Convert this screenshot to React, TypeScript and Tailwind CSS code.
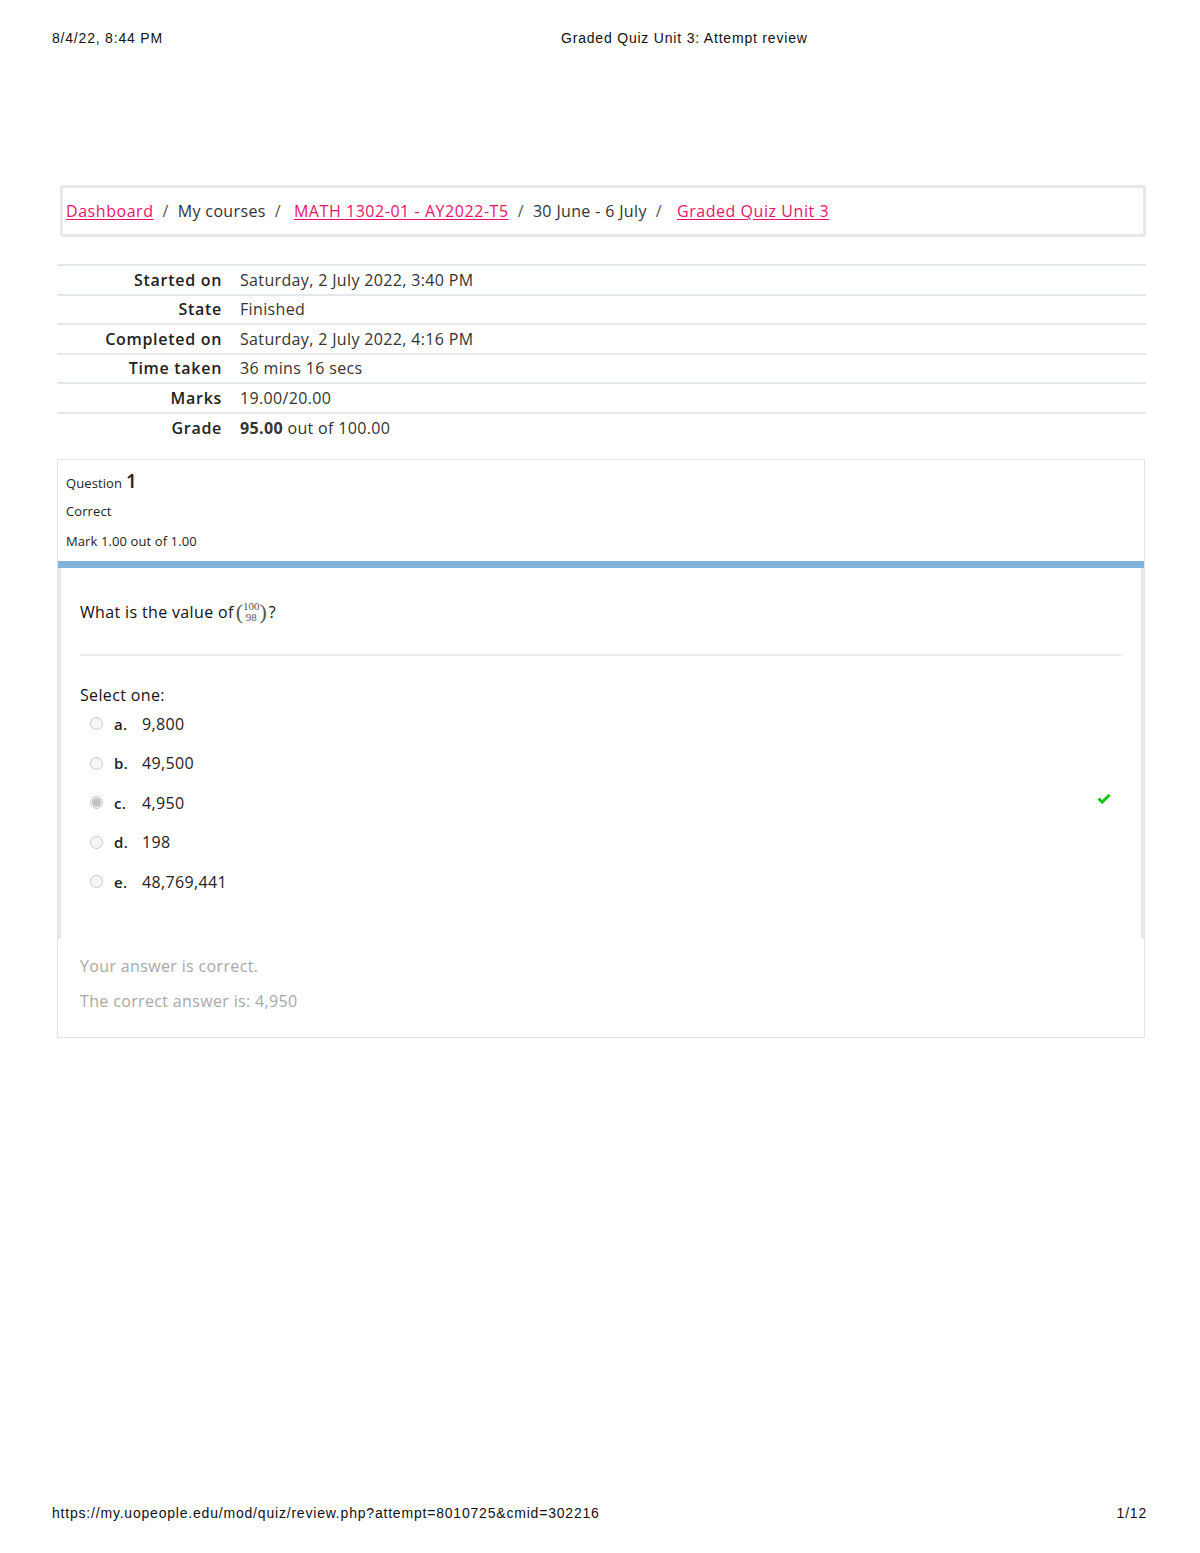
import React from 'react'

const sans = "font-['Open_Sans','Liberation_Sans',sans-serif]"

const rows: { label: string; value: React.ReactNode }[] = [
  { label: 'Started on', value: 'Saturday, 2 July 2022, 3:40 PM' },
  { label: 'State', value: 'Finished' },
  { label: 'Completed on', value: 'Saturday, 2 July 2022, 4:16 PM' },
  { label: 'Time taken', value: '36 mins 16 secs' },
  { label: 'Marks', value: '19.00/20.00' },
  {
    label: 'Grade',
    value: (
      <>
        <b className="font-bold">95.00</b> out of 100.00
      </>
    ),
  },
]

const options = [
  { key: 'a.', value: '9,800' },
  { key: 'b.', value: '49,500' },
  { key: 'c.', value: '4,950', checked: true },
  { key: 'd.', value: '198' },
  { key: 'e.', value: '48,769,441' },
]

function Crumb({ children }: { children: React.ReactNode }) {
  return <a className="tracking-[0.55px] text-[#e8136b] underline underline-offset-2">{children}</a>
}

function Sep() {
  return <span className="px-[9px] text-[#555]">/</span>
}

function Radio({ checked }: { checked?: boolean }) {
  return (
    <span className="flex h-[13px] w-[13px] items-center justify-center rounded-full border border-[#c8c8c8] bg-[#f6f6f6]">
      {checked && <span className="h-[9px] w-[9px] rounded-full bg-[#c4c4c4]" />}
    </span>
  )
}

function Binom() {
  return (
    <span className="mx-[2px] inline-flex items-center align-middle font-['Liberation_Serif',serif] tracking-normal text-[#555]">
      <span className="text-[22px] font-light leading-none">(</span>
      <span className="flex flex-col items-center text-[11px] leading-[11px]">
        <span>100</span>
        <span>98</span>
      </span>
      <span className="text-[22px] font-light leading-none">)</span>
    </span>
  )
}

export default function App() {
  return (
    <div className="flex min-h-[1553px] w-[1200px] flex-col bg-white text-[#1d2125]">
      <div className="flex pt-[30px] pl-[52px] font-['Liberation_Sans',Arial,sans-serif] text-[14px] leading-[16px] tracking-[0.8px] text-[#111]">
        <span className="w-[509px]">8/4/22, 8:44 PM</span>
        <span>Graded Quiz Unit 3: Attempt review</span>
      </div>

      <main className={`${sans} mt-[139px] pl-[57px] pr-[54px] tracking-[0.35px]`}>
        <div className="ml-[3px] flex h-[52px] items-center rounded-[3px] border-[3px] border-[#e6e8ec] pl-[3px] text-[16px] text-[#333]">
          <Crumb>Dashboard</Crumb>
          <Sep />
          <span>My courses</span>
          <Sep />
          <span className="pl-[4px]" />
          <Crumb>MATH 1302-01 - AY2022-T5</Crumb>
          <Sep />
          <span>30 June - 6 July</span>
          <Sep />
          <span className="pl-[6px]" />
          <Crumb>Graded Quiz Unit 3</Crumb>
        </div>

        <div className="mt-[27px] border-t-2 border-[#e3e6ea] text-[16px]">
          {rows.map((r, i) => (
            <div
              key={r.label}
              className={`flex h-[29.5px] items-center ${i < rows.length - 1 ? 'border-b-2 border-[#e3e6ea]' : ''}`}
            >
              <span className="w-[165px] text-right font-semibold tracking-[0.7px] text-[#222]">{r.label}</span>
              <span className="pl-[18px] text-[#333]">{r.value}</span>
            </div>
          ))}
        </div>

        <div className="mt-[16px] mr-[1px] border border-[#e3e3e3]">
          <div className="px-[8px] pt-[12px] pb-[13px] text-[13px] leading-none tracking-[0.1px] text-[#222]">
            <div className="flex items-baseline gap-[4px]">
              <span>Question</span>
              <span className="text-[19px] font-semibold">1</span>
            </div>
            <div className="mt-[14px]">Correct</div>
            <div className="mt-[17px]">Mark 1.00 out of 1.00</div>
          </div>

          <div className="h-[7px] bg-[#80b4dc]" />

          <div className="border-x-[3px] border-[#e5e8ec] pr-[20px] pl-[19px]">
            <div className="flex h-[86px] items-center pt-[2px] text-[16px] text-[#111]">
              <span>What is the value of</span>
              <Binom />
              <span>?</span>
            </div>
            <div className="h-[2px] bg-[#e9ebee]" />
            <div className="pt-[28px] text-[16px] leading-[22px] text-[#111]">Select one:</div>
            <div className="-mt-[2px] pb-[37px]">
              {options.map((o) => (
                <div key={o.key} className="flex h-[39.5px] items-center text-[16px] text-[#222]">
                  <span className="ml-[10px]">
                    <Radio checked={o.checked} />
                  </span>
                  <span className="ml-[11px] w-[28px] text-[15px] font-semibold">{o.key}</span>
                  <span>{o.value}</span>
                  {o.checked && (
                    <svg viewBox="0 0 16 16" className="mb-[8px] ml-auto mr-[9px] h-[16px] w-[16px]">
                      <path
                        d="M1.5 8.6 L3.6 6.6 L6.2 9.1 L12.6 2.8 L14.6 4.8 L6.2 13.2 Z"
                        fill="#14c414"
                      />
                    </svg>
                  )}
                </div>
              ))}
            </div>
          </div>

          <div className="px-[22px] pt-[16px] pb-[25px] text-[16px] leading-[22px] text-[#a8a8a8]">
            <div>Your answer is correct.</div>
            <div className="mt-[13px]">The correct answer is: 4,950</div>
          </div>
        </div>
      </main>

      <div className="mt-auto flex justify-between px-[52px] pb-[32px] font-['Liberation_Sans',Arial,sans-serif] text-[14px] leading-[16px] tracking-[0.8px] text-[#111]">
        <span>https://my.uopeople.edu/mod/quiz/review.php?attempt=8010725&amp;cmid=302216</span>
        <span className="pr-[1px]">1/12</span>
      </div>
    </div>
  )
}
